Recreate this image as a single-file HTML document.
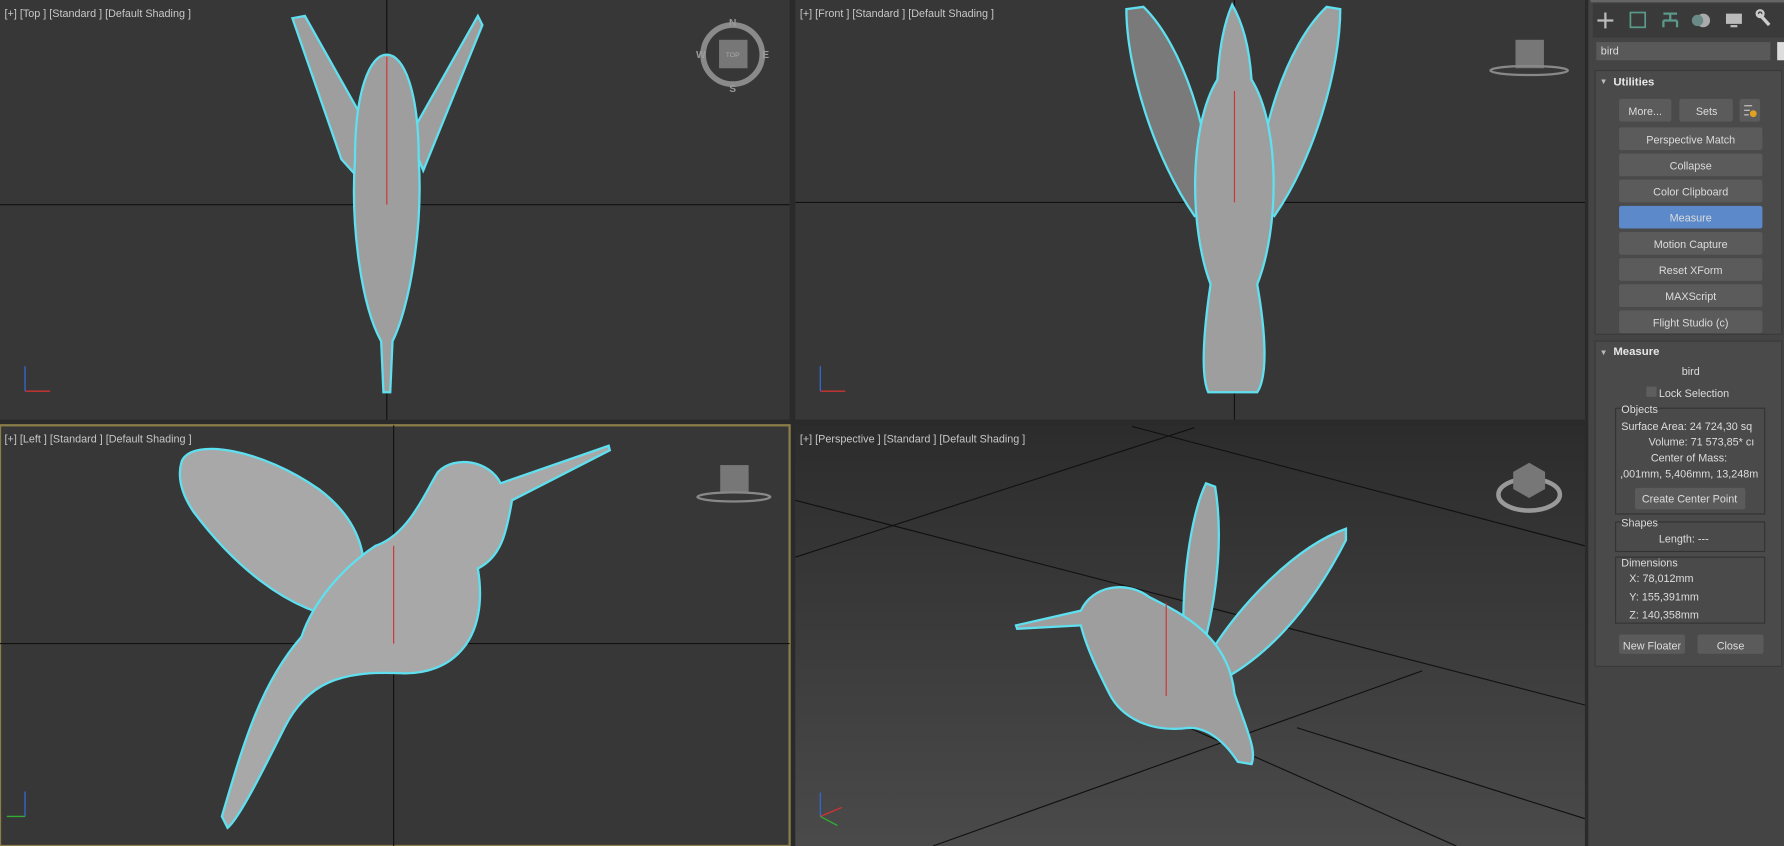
<!DOCTYPE html>
<html><head><meta charset="utf-8"><style>
html,body{margin:0;padding:0;background:#2b2b2b;overflow:hidden}
svg{display:block}
text{font-family:"Liberation Sans",sans-serif}
</style></head><body>
<svg width="1784" height="846" viewBox="0 0 1568 744" preserveAspectRatio="none" xmlns="http://www.w3.org/2000/svg">
<defs>
<linearGradient id="pg" x1="0" y1="0" x2="0" y2="1"><stop offset="0" stop-color="#2c2c2c"/><stop offset="1" stop-color="#4a4a4a"/></linearGradient>
</defs>
<rect width="1568" height="744" fill="#2a2a2a"/>
<rect x="0" y="0" width="694" height="369" fill="#373737"/>
<rect x="699" y="0" width="694" height="369" fill="#373737"/>
<rect x="0" y="374" width="694" height="370" fill="#373737" stroke="#8a7d4a" stroke-width="2"/>
<rect x="699" y="374" width="694" height="370" fill="url(#pg)"/>
<g stroke="#111" stroke-width="1">
<line x1="0" y1="180" x2="694" y2="180"/><line x1="340" y1="0" x2="340" y2="369"/>
<line x1="699" y1="178" x2="1393" y2="178"/><line x1="1085" y1="0" x2="1085" y2="369"/>
<line x1="0" y1="566" x2="694" y2="566"/><line x1="346" y1="374" x2="346" y2="744"/>
<line x1="699" y1="440" x2="1393" y2="620"/><line x1="995" y1="375" x2="1393" y2="480"/>
<line x1="699" y1="490" x2="1050" y2="376"/><line x1="820" y1="744" x2="1250" y2="590"/>
<line x1="1140" y1="640" x2="1393" y2="720"/><line x1="1000" y1="620" x2="1280" y2="744"/>
</g>
<g font-size="9.5" fill="#c8c8c8">
<text x="4" y="15">[+] [Top ] [Standard ] [Default Shading ]</text>
<text x="703" y="15">[+] [Front ] [Standard ] [Default Shading ]</text>
<text x="4" y="389">[+] [Left ] [Standard ] [Default Shading ]</text>
<text x="703" y="389">[+] [Perspective ] [Standard ] [Default Shading ]</text>
</g>
<circle cx="644" cy="48" r="26" fill="none" stroke="#8a8a8a" stroke-width="5"/>
<rect x="632" y="35" width="25" height="25" fill="#777"/>
<text x="644" y="50" font-size="6" fill="#aaa" text-anchor="middle">TOP</text>
<g font-size="9" fill="#999" font-weight="bold" text-anchor="middle"><text x="644" y="23">N</text><text x="644" y="81">S</text><text x="616" y="51">W</text><text x="673" y="51">E</text></g>
<rect x="1332" y="35" width="25" height="25" fill="#777"/><ellipse cx="1344" cy="62" rx="34" ry="4" fill="none" stroke="#888" stroke-width="2"/>
<rect x="633" y="409" width="25" height="25" fill="#777"/><ellipse cx="645" cy="437" rx="32" ry="4" fill="none" stroke="#888" stroke-width="2"/>
<ellipse cx="1344" cy="435" rx="27" ry="14" fill="none" stroke="#999" stroke-width="4"/>
<polygon points="1330,415 1344,407 1358,415 1358,430 1344,438 1330,430" fill="#777"/>
<g stroke-width="1.2"><line x1="22" y1="344" x2="44" y2="344" stroke="#c33"/><line x1="22" y1="344" x2="22" y2="322" stroke="#36c"/>
<line x1="721" y1="344" x2="743" y2="344" stroke="#c33"/><line x1="721" y1="344" x2="721" y2="322" stroke="#36c"/>
<line x1="22" y1="718" x2="22" y2="696" stroke="#36c"/><line x1="22" y1="718" x2="6" y2="718" stroke="#3a3"/>
<line x1="721" y1="718" x2="721" y2="697" stroke="#36c"/><line x1="721" y1="718" x2="740" y2="710" stroke="#c33"/><line x1="721" y1="718" x2="736" y2="726" stroke="#3a3"/></g>
<g fill="#9e9e9e" stroke="#5fe0f0" stroke-width="2">
<path d="M257,16 L268,14 L322,110 L318,160 L300,140 Z"/>
<path d="M420,14 L424,22 L372,150 L360,120 Z"/>
<path d="M340,48 C355,48 368,80 368,140 C372,200 360,270 345,300 L343,345 L337,345 L335,300 C318,270 308,200 312,140 C312,80 325,48 340,48 Z"/>
<path d="M990,8 L1005,6 C1040,40 1065,120 1065,180 L1050,190 C1015,140 990,60 990,8 Z" fill="#7a7a7a"/>
<path d="M1178,8 L1166,6 C1130,40 1105,120 1105,180 L1120,190 C1155,140 1178,60 1178,8 Z"/>
<path d="M1083,4 C1092,20 1098,40 1100,70 C1125,110 1125,200 1105,250 C1112,290 1115,330 1105,345 L1062,345 C1055,330 1058,290 1064,250 C1045,200 1045,110 1070,70 C1072,40 1076,20 1083,4 Z"/>
<path d="M160,405 C170,385 230,395 280,430 C320,460 330,500 310,545 C250,540 200,490 170,450 C160,435 155,420 160,405 Z" fill="#a8a8a8"/>
<path d="M440,425 L535,392 L536,396 L450,440 C445,470 440,490 420,500 C430,560 400,595 350,592 C300,590 270,600 250,640 C230,680 210,720 200,728 L195,718 C215,650 230,600 265,560 C275,530 300,500 330,480 C360,470 375,430 385,415 C400,400 430,405 440,425 Z" fill="#a8a8a8"/>
<path d="M1060,425 L1068,428 C1075,470 1070,520 1060,560 L1040,550 C1040,500 1048,450 1060,425 Z"/>
<path d="M1183,465 L1183,475 C1150,540 1110,580 1070,600 L1060,580 C1090,530 1140,480 1183,465 Z"/>
<path d="M893,550 L950,537 C960,515 990,510 1010,525 C1040,540 1080,560 1085,610 C1095,640 1105,660 1100,672 L1088,670 C1075,650 1060,640 1045,640 C1010,645 985,630 975,610 C965,590 955,570 950,550 L894,553 Z"/>
</g>
<g stroke="#c33" stroke-width="1"><line x1="340" y1="50" x2="340" y2="180"/><line x1="1085" y1="80" x2="1085" y2="178"/><line x1="346" y1="480" x2="346" y2="566"/><line x1="1025" y1="530" x2="1025" y2="612"/></g>
<rect x="1396" y="0" width="172" height="744" fill="#444"/>
<rect x="1398" y="0" width="170" height="2" fill="#666"/>
<rect x="1400" y="3" width="168" height="30" fill="#3a3a3a"/>
<g stroke="#bbb" stroke-width="2" fill="none"><line x1="1404" y1="18" x2="1418" y2="18"/><line x1="1411" y1="11" x2="1411" y2="25"/></g>
<rect x="1433" y="11" width="13" height="13" fill="none" stroke="#5a9a8a" stroke-width="1.5"/>
<path d="M1462,12 h12 M1468,12 v6 M1462,18 h12 M1462,18 v6 M1474,18 v6" stroke="#5a9a8a" stroke-width="2" fill="none"/>
<circle cx="1497" cy="18" r="6" fill="#aaa"/><circle cx="1492" cy="18" r="5" fill="#6a8a88"/>
<rect x="1517" y="12" width="14" height="9" fill="#bbb"/><rect x="1521" y="22" width="6" height="2" fill="#bbb"/>
<path d="M1546,12 l9,10" stroke="#ccc" stroke-width="3"/><circle cx="1547" cy="12" r="3" fill="none" stroke="#ccc" stroke-width="2"/>
<rect x="1403" y="37" width="153" height="16" fill="#595959"/><rect x="1562" y="37" width="6" height="16" fill="#ddd"/>
<text x="1407" y="48" font-size="9.5" fill="#ddd">bird</text>
<rect x="1402" y="62" width="164" height="232" fill="#4a4a4a" stroke="#3a3a3a"/>
<text x="1406" y="74" font-size="7" fill="#bbb">▼</text>
<text x="1418" y="75" font-size="10" font-weight="bold" fill="#e6e6e6">Utilities</text>
<g fill="#5b5b5b">
<rect x="1423" y="87" width="46" height="20" rx="2"/><rect x="1476" y="87" width="47" height="20" rx="2"/><rect x="1529" y="87" width="18" height="20" rx="2"/>
<rect x="1423" y="112" width="126" height="20" rx="2"/><rect x="1423" y="135" width="126" height="20" rx="2"/><rect x="1423" y="158" width="126" height="20" rx="2"/>
<rect x="1423" y="204" width="126" height="20" rx="2"/><rect x="1423" y="227" width="126" height="20" rx="2"/><rect x="1423" y="250" width="126" height="20" rx="2"/><rect x="1423" y="273" width="126" height="20" rx="2"/>
</g>
<rect x="1423" y="181" width="126" height="20" rx="2" fill="#5b89c9"/>
<circle cx="1541" cy="100" r="3" fill="#e0a020"/><g stroke="#ccc"><line x1="1533" y1="93" x2="1540" y2="93"/><line x1="1533" y1="97" x2="1538" y2="97"/><line x1="1533" y1="101" x2="1537" y2="101"/></g>
<g font-size="9.5" fill="#dcdcdc" text-anchor="middle">
<text x="1446" y="101">More...</text><text x="1500" y="101">Sets</text>
<text x="1486" y="126">Perspective Match</text><text x="1486" y="149">Collapse</text><text x="1486" y="172">Color Clipboard</text><text x="1486" y="195">Measure</text>
<text x="1486" y="218">Motion Capture</text><text x="1486" y="241">Reset XForm</text><text x="1486" y="264">MAXScript</text><text x="1486" y="287">Flight Studio (c)</text>
</g>
<rect x="1402" y="300" width="164" height="286" fill="#4a4a4a" stroke="#3a3a3a"/>
<text x="1406" y="312" font-size="7" fill="#bbb">▼</text>
<text x="1418" y="312" font-size="10" font-weight="bold" fill="#e6e6e6">Measure</text>
<text x="1486" y="330" font-size="9.5" fill="#ddd" text-anchor="middle">bird</text>
<rect x="1447" y="340" width="9" height="9" fill="#5e5e5e"/>
<text x="1458" y="349" font-size="9.5" fill="#ddd">Lock Selection</text>
<g fill="none" stroke="#333"><rect x="1420" y="359" width="131" height="93"/><rect x="1420" y="459" width="131" height="26"/><rect x="1420" y="490" width="131" height="58"/></g>
<g font-size="9.5" fill="#ddd">
<text x="1425" y="363">Objects</text>
<text x="1425" y="378">Surface Area: 24 724,30 sq</text>
<text x="1449" y="392">Volume:  71 573,85* cı</text>
<text x="1451" y="406">Center of Mass:</text>
<text x="1424" y="420">,001mm, 5,406mm, 13,248m</text>
<text x="1425" y="463">Shapes</text>
<text x="1458" y="477">Length: ---</text>
<text x="1425" y="498">Dimensions</text>
<text x="1432" y="512">X:   78,012mm</text>
<text x="1432" y="528">Y:   155,391mm</text>
<text x="1432" y="544">Z:   140,358mm</text>
</g>
<rect x="1437" y="429" width="97" height="19" rx="2" fill="#5b5b5b"/>
<text x="1485" y="442" font-size="9.5" fill="#ddd" text-anchor="middle">Create Center Point</text>
<rect x="1423" y="558" width="58" height="17" rx="2" fill="#5b5b5b"/><rect x="1492" y="558" width="58" height="17" rx="2" fill="#5b5b5b"/>
<text x="1452" y="571" font-size="9.5" fill="#ddd" text-anchor="middle">New Floater</text>
<text x="1521" y="571" font-size="9.5" fill="#ddd" text-anchor="middle">Close</text>
</svg>
</body></html>
